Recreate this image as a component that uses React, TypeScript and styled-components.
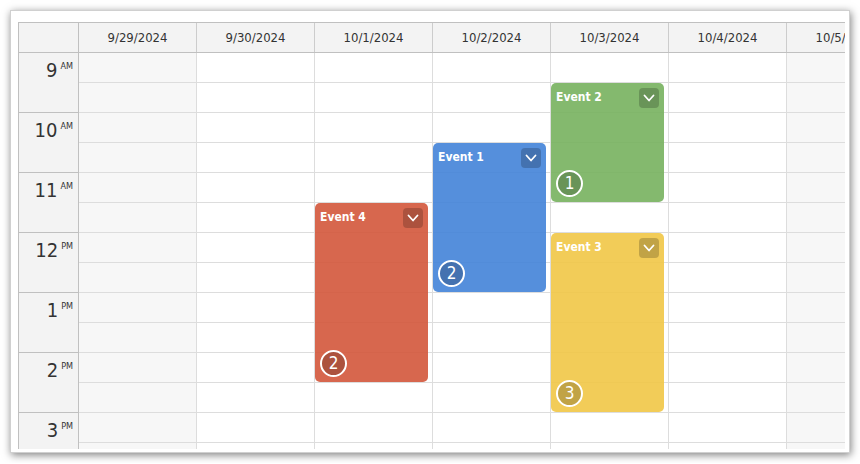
import React from "react";
import styled, { createGlobalStyle } from "styled-components";

const GlobalStyle = createGlobalStyle`
  html, body { margin: 0; padding: 0; background: #ffffff; }
  body {
    font-family: "DejaVu Sans Condensed", "DejaVu Sans", sans-serif;
    font-stretch: condensed;
    color: #333333;
  }
  * { box-sizing: border-box; }
`;

const Card = styled.div`
  margin: 10px;
  width: 840px;
  height: 443px;
  background: #ffffff;
  border: 1px solid #d0d0d0;
  box-shadow: 1px 2px 8px rgba(0, 0, 0, 0.5);
  padding: 11px 4px 3px 7px;
  display: flex;
`;

const Calendar = styled.div`
  flex: 1;
  display: flex;
  flex-direction: column;
  overflow: hidden;
  border-left: 1px solid #c0c0c0;
  border-top: 1px solid #c0c0c0;
`;

const HeaderRow = styled.div`
  display: flex;
  flex: 0 0 30px;
  background: #f3f3f3;
  border-bottom: 1px solid #c0c0c0;
`;

const Corner = styled.div`
  flex: 0 0 60px;
  border-right: 1px solid #c0c0c0;
`;

const DateCell = styled.div`
  flex: 0 0 118px;
  border-right: 1px solid #cccccc;
  font-size: 13px;
  line-height: 29px;
  text-align: center;
  color: #333333;
  white-space: nowrap;
`;

const Body = styled.div`
  display: flex;
  flex: 1;
  overflow: hidden;
`;

const RowHeader = styled.div`
  flex: 0 0 60px;
  display: flex;
  flex-direction: column;
  background: #f3f3f3;
  border-right: 1px solid #c0c0c0;
`;

const HourCell = styled.div`
  flex: 0 0 60px;
  border-bottom: 1px solid #c0c0c0;
  display: flex;
  justify-content: flex-end;
  align-items: flex-start;
  padding: 5px 5px 0 0;
`;

const HourNum = styled.span`
  font-size: 20px;
  line-height: 24px;
  color: #333333;
`;

const HourSuffix = styled.span`
  font-size: 9px;
  line-height: 9px;
  margin-top: 4px;
  margin-left: 3px;
  color: #333333;
`;

const DayColumn = styled.div<{ $weekend?: boolean }>`
  flex: 0 0 118px;
  position: relative;
  display: flex;
  flex-direction: column;
  border-right: 1px solid #dddddd;
  background: ${(p) => (p.$weekend ? "#f7f7f7" : "#ffffff")};
`;

const Slot = styled.div`
  flex: 0 0 30px;
  border-bottom: 1px solid #dddddd;
`;

const EventBox = styled.div<{ $color: string }>`
  position: absolute;
  left: 0;
  width: calc(100% - 4px);
  border-radius: 5px;
  background: ${(p) => p.$color};
  color: #ffffff;
  overflow: hidden;
`;

const EventTitle = styled.div`
  font-size: 12px;
  font-weight: bold;
  padding: 7px 5px 6px;
  white-space: nowrap;
`;

const MenuButton = styled.div`
  position: absolute;
  top: 5px;
  right: 5px;
  width: 20px;
  height: 20px;
  border-radius: 4px;
  background: rgba(0, 0, 0, 0.2);
  display: flex;
  align-items: center;
  justify-content: center;
`;

const CountBadge = styled.div`
  position: absolute;
  left: 5px;
  bottom: 5px;
  width: 27px;
  height: 27px;
  border-radius: 50%;
  border: 2px solid #ffffff;
  background: rgba(0, 0, 0, 0.2);
  display: flex;
  align-items: center;
  justify-content: center;
  font-size: 17px;
  line-height: 1;
  color: #ffffff;
`;

const Chevron = () => (
  <svg width="20" height="20" viewBox="0 0 20 20">
    <polyline
      points="5.5,7.5 10,12.5 14.5,7.5"
      fill="none"
      stroke="#ffffff"
      strokeWidth="1.8"
      strokeLinecap="round"
      strokeLinejoin="round"
    />
  </svg>
);

type Ev = { title: string; start: number; end: number; color: string; count: number };

const days: { label: string; weekend: boolean; events: Ev[] }[] = [
  { label: "9/29/2024", weekend: true, events: [] },
  { label: "9/30/2024", weekend: false, events: [] },
  {
    label: "10/1/2024",
    weekend: false,
    events: [{ title: "Event 4", start: 11.5, end: 14.5, color: "rgba(211, 86, 59, 0.9)", count: 2 }],
  },
  {
    label: "10/2/2024",
    weekend: false,
    events: [{ title: "Event 1", start: 10.5, end: 13, color: "rgba(66, 131, 216, 0.9)", count: 2 }],
  },
  {
    label: "10/3/2024",
    weekend: false,
    events: [
      { title: "Event 2", start: 9.5, end: 11.5, color: "rgba(119, 177, 94, 0.9)", count: 1 },
      { title: "Event 3", start: 12, end: 15, color: "rgba(241, 199, 70, 0.9)", count: 3 },
    ],
  },
  { label: "10/4/2024", weekend: false, events: [] },
  { label: "10/5/2024", weekend: true, events: [] },
];

const hours = [
  { n: "9", s: "AM" },
  { n: "10", s: "AM" },
  { n: "11", s: "AM" },
  { n: "12", s: "PM" },
  { n: "1", s: "PM" },
  { n: "2", s: "PM" },
  { n: "3", s: "PM" },
];

const START = 9;
const HOUR_PX = 60;

export default function App() {
  return (
    <>
      <GlobalStyle />
      <Card>
        <Calendar>
          <HeaderRow>
            <Corner />
            {days.map((d) => (
              <DateCell key={d.label}>{d.label}</DateCell>
            ))}
          </HeaderRow>
          <Body>
            <RowHeader>
              {hours.map((h) => (
                <HourCell key={h.n}>
                  <HourNum>{h.n}</HourNum>
                  <HourSuffix>{h.s}</HourSuffix>
                </HourCell>
              ))}
            </RowHeader>
            {days.map((d) => (
              <DayColumn key={d.label} $weekend={d.weekend}>
                {Array.from({ length: 14 }).map((_, i) => (
                  <Slot key={i} />
                ))}
                {d.events.map((e) => (
                  <EventBox
                    key={e.title}
                    $color={e.color}
                    style={{
                      top: (e.start - START) * HOUR_PX,
                      height: (e.end - e.start) * HOUR_PX - 1,
                    }}
                  >
                    <EventTitle>{e.title}</EventTitle>
                    <MenuButton>
                      <Chevron />
                    </MenuButton>
                    <CountBadge>{e.count}</CountBadge>
                  </EventBox>
                ))}
              </DayColumn>
            ))}
          </Body>
        </Calendar>
      </Card>
    </>
  );
}
